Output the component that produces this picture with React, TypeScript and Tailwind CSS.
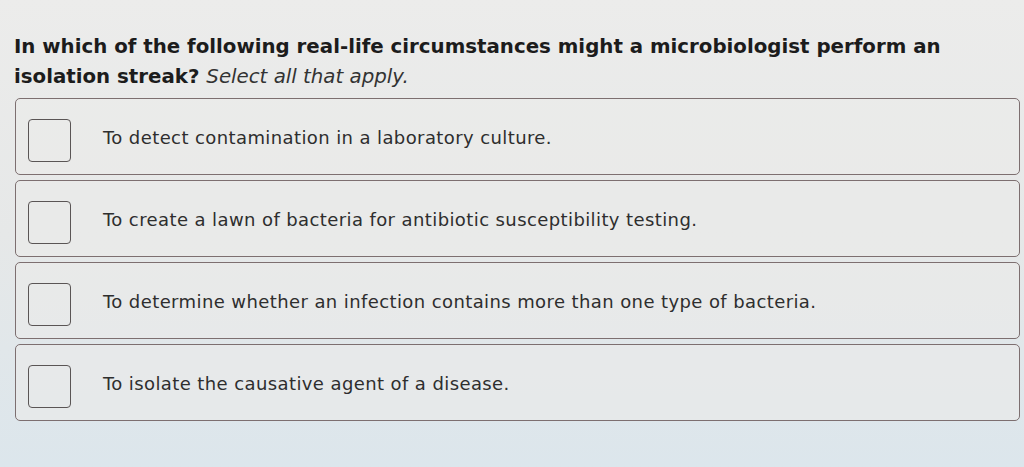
const options = [
  'To detect contamination in a laboratory culture.',
  'To create a lawn of bacteria for antibiotic susceptibility testing.',
  'To determine whether an infection contains more than one type of bacteria.',
  'To isolate the causative agent of a disease.',
];

export default function App() {
  return (
    <div
      className="h-[467px] w-[1024px] overflow-hidden bg-gradient-to-b from-[#ececeb] via-[#e6e8e8] to-[#dce6ec] text-[#2b2b2b]"
      style={{ fontFamily: '"DejaVu Sans", "Open Sans", sans-serif' }}
    >
      <div className="px-[14px] pt-[32px]">
        <h1 className="text-[19.8px] font-bold leading-[30px] text-[#1c1c1c]">
          In which of the following real-life circumstances might a microbiologist perform an
          <br />
          isolation streak? <span className="font-normal italic text-[#333]">Select all that apply.</span>
        </h1>
      </div>
      <div className="mt-[6px] flex flex-col gap-[5px] pl-[15px] pr-[4px]">
        {options.map((o) => (
          <label
            key={o}
            className="flex h-[77px] items-center rounded-[5px] border-[1.5px] border-[#7d6f70] bg-[#ebebea]/60 pl-[12px]"
          >
            <span className="mt-[8px] h-[43px] w-[43px] shrink-0 rounded-[4px] border-[1.5px] border-[#5a5555]" />
            <span className="ml-[32px] mt-[2px] text-[18px] tracking-[0.4px] text-[#2e2e2e]">{o}</span>
          </label>
        ))}
      </div>
    </div>
  );
}
